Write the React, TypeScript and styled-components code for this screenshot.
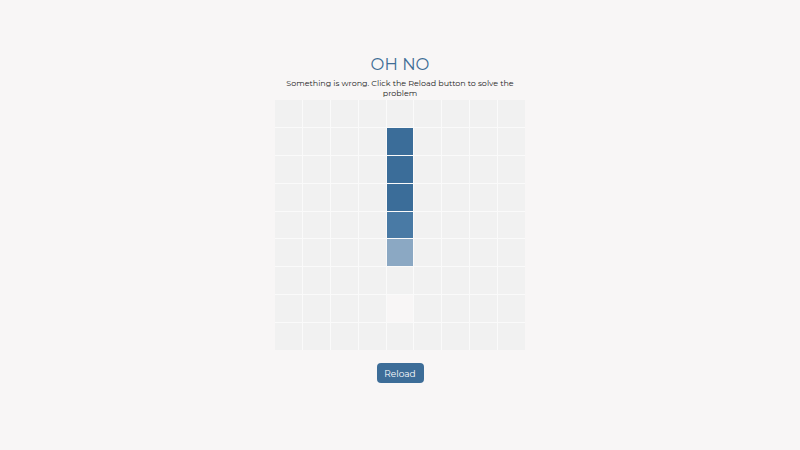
import { createGlobalStyle } from 'styled-components'
import styled from 'styled-components'

const GlobalStyle = createGlobalStyle`
  html, body {
    margin: 0;
    padding: 0;
    background: #f8f6f6;
    font-family: "Montserrat", "Noto Sans", "Open Sans", sans-serif;
  }
`

const Page = styled.div`
  width: 800px;
  height: 450px;
  display: flex;
  flex-direction: column;
  align-items: center;
  padding-top: 54px;
  box-sizing: border-box;
`

const Title = styled.h1`
  margin: 0;
  font-size: 16.5px;
  font-weight: 400;
  color: #3f6e96;
  line-height: 20px;
`

const Message = styled.p`
  margin: 4px 0 0;
  width: 250px;
  text-align: center;
  font-size: 8px;
  font-weight: 400;
  line-height: 10px;
  color: #222;
`

const Grid = styled.div`
  margin-top: 2px;
  width: 250px;
  height: 250px;
  display: grid;
  grid-template-columns: repeat(9, 1fr);
  grid-template-rows: repeat(9, 1fr);
  gap: 1px;
  background: #fafafa;
`

const Cell = styled.div<{ $tone: string }>`
  background: ${p => p.$tone};
`

const Reload = styled.button`
  margin-top: 13px;
  width: 47px;
  height: 20px;
  border: none;
  border-radius: 4px;
  background: #3d6d98;
  color: #fff;
  font-family: inherit;
  font-size: 9px;
  padding: 0;
  cursor: pointer;
`

// column 4 holds the exclamation mark
const toneFor = (row: number, col: number) => {
  if (col !== 4) return '#f1f1f1'
  if (row >= 1 && row <= 3) return '#3b6d99'
  if (row === 4) return '#497aa5'
  if (row === 5) return '#8ba8c3'
  if (row === 7) return '#f8f6f6'
  return '#f1f1f1'
}

export default function App() {
  const cells = []
  for (let r = 0; r < 9; r++) {
    for (let c = 0; c < 9; c++) {
      cells.push(<Cell key={`${r}-${c}`} $tone={toneFor(r, c)} />)
    }
  }
  return (
    <>
      <GlobalStyle />
      <Page>
        <Title>OH NO</Title>
        <Message>Something is wrong. Click the Reload button to solve the problem</Message>
        <Grid>{cells}</Grid>
        <Reload>Reload</Reload>
      </Page>
    </>
  )
}
